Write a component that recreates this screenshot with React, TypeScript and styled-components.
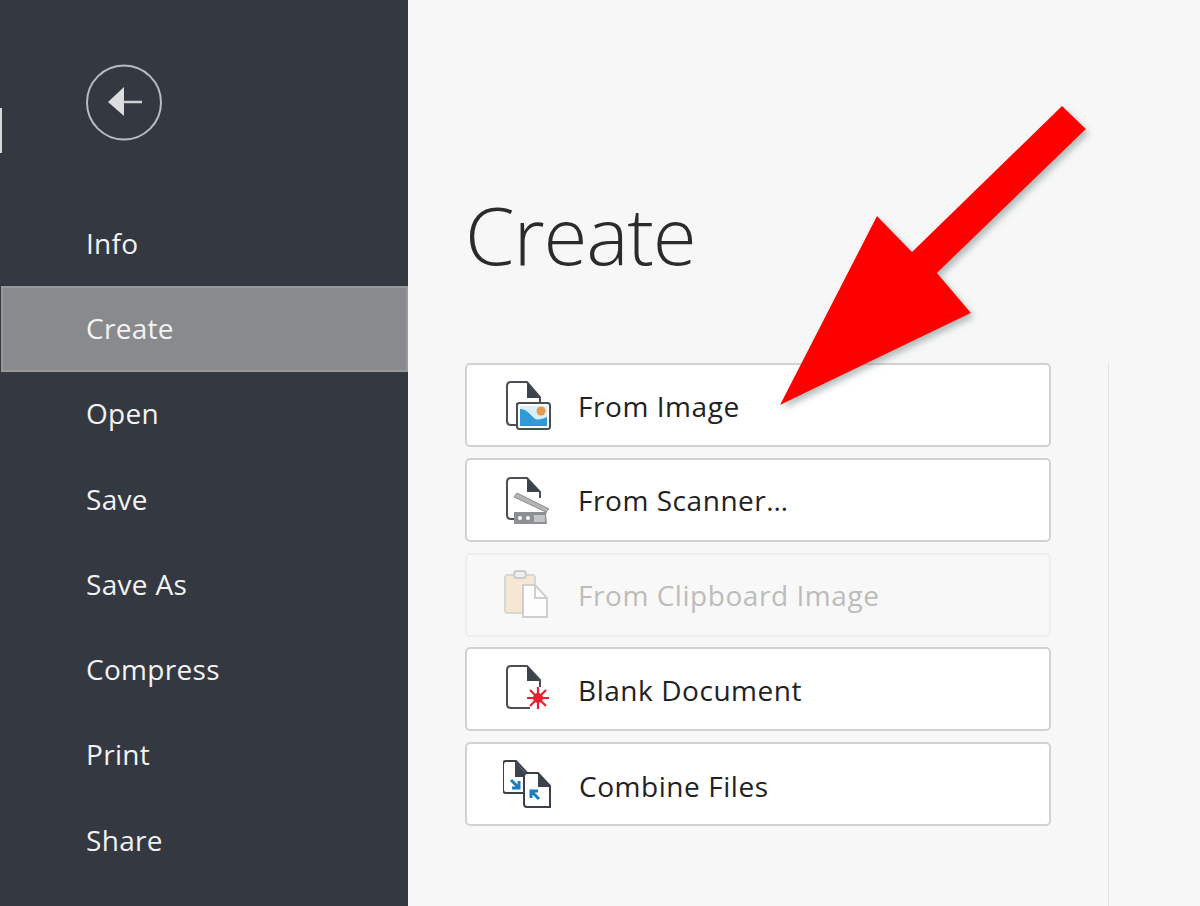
import React from "react";
import styled, { createGlobalStyle } from "styled-components";

const Global = createGlobalStyle`
  html, body { margin: 0; padding: 0; width: 1200px; height: 906px; overflow: hidden; background: #f7f7f7; }
  * { box-sizing: border-box; }
`;

const Page = styled.div`
  position: relative;
  display: flex;
  width: 1200px;
  height: 906px;
  overflow: hidden;
  font-family: "Open Sans", "Noto Sans", sans-serif;
`;

const Sidebar = styled.nav`
  position: relative;
  flex: 0 0 408px;
  height: 906px;
  background: #343841;
  padding: 64px 0 0 0;
  display: flex;
  flex-direction: column;
`;

const EdgeMark = styled.div`
  position: absolute;
  left: 0;
  top: 108px;
  width: 2px;
  height: 45px;
  background: #d8d8d8;
`;

const BackButton = styled.button`
  width: 78px;
  height: 78px;
  margin: 0 0 0 85px;
  padding: 0;
  border: 0;
  background: none;
  display: block;
`;

const Menu = styled.ul`
  list-style: none;
  margin: 59px 0 0;
  padding: 0;
  display: flex;
  flex-direction: column;
`;

const MenuItem = styled.li<{ $active?: boolean }>`
  height: 85.3px;
  display: flex;
  align-items: center;
  padding-left: ${(p) => (p.$active ? "85px" : "86px")};
  padding-bottom: 2px;
  font-size: 28px;
  letter-spacing: 0.3px;
  color: #f2f3f3;
  background: ${(p) => (p.$active ? "#898a8e" : "transparent")};
  box-shadow: ${(p) => (p.$active ? "inset 0 0 0 2px #96989c" : "none")};
  margin-left: ${(p) => (p.$active ? "1px" : "0")};
`;

const Main = styled.main`
  flex: 1;
  padding: 188px 0 0 57px;
  display: flex;
  flex-direction: column;
`;

const Title = styled.h1`
  margin: 0 0 83px;
  font-weight: 300;
  font-size: 80px;
  line-height: 92px;
  letter-spacing: -1.2px;
  color: #2b2b2b;
`;

const Columns = styled.div`
  display: flex;
  flex: 1;
`;

const List = styled.div`
  width: 586px;
  display: flex;
  flex-direction: column;
  gap: 10.8px;
`;

const Divider = styled.div`
  width: 1px;
  margin-left: 57px;
  background: #e2e2e2;
`;

const Row = styled.button<{ $disabled?: boolean; $gap?: number }>`
  height: 84px;
  width: 100%;
  padding: 0 0 0 36px;
  display: flex;
  align-items: center;
  gap: ${(p) => p.$gap ?? 21}px;
  text-align: left;
  border-radius: 5px;
  border: 2px solid ${(p) => (p.$disabled ? "#eeeeee" : "#d2d2d2")};
  background: ${(p) => (p.$disabled ? "#f8f8f8" : "#ffffff")};
  font-family: inherit;
  font-size: 28px;
  letter-spacing: 0.55px;
  color: ${(p) => (p.$disabled ? "#bcbcbc" : "#222222")};
`;

const RowLabel = styled.span<{ $drop?: number }>`
  padding-top: ${(p) => p.$drop ?? 1}px;
`;

const RowIcon = styled.svg`
  width: 54px;
  height: 54px;
  flex: none;
`;

const ArrowOverlay = styled.svg`
  position: absolute;
  left: 0;
  top: 0;
  width: 1200px;
  height: 906px;
  pointer-events: none;
`;

const ImageIcon = () => (
  <RowIcon viewBox="0 0 54 54">
    <path d="M8 4h16l13 15v7H14v21H8c-3 0-4-1-4-4V8c0-3 1-4 4-4z" fill="#fff" stroke="#4b4f55" strokeWidth="2" />
    <path d="M24 4l13 16H24z" fill="#3d434c" />
    <rect x="14" y="25" width="33" height="26" rx="2.5" fill="#fff" stroke="#4b4f55" strokeWidth="2" />
    <rect x="17" y="28" width="27" height="20" fill="#d9eef8" />
    <path d="M17 31c6 0 10 5 14 9 3 3 8 1 13-1v9H17z" fill="#2f9ad6" />
    <circle cx="38" cy="33" r="4.5" fill="#e69a4e" />
  </RowIcon>
);

const ScannerIcon = () => (
  <RowIcon viewBox="0 0 54 54">
    <path d="M8 5h16l13 14v6M8 5C5 5 4 6 4 9v33c0 3 1 4 4 4h3" fill="#fff" stroke="#4b4f55" strokeWidth="2" />
    <path d="M24 5l13 14H24z" fill="#3d434c" />
    <path d="M11 24l3-4 32 16-3 3z" fill="#b2b4b6" stroke="#8b8d90" strokeWidth="1" />
    <path d="M11 39h33l-1 2 1 10H11z" fill="#8d8f92" />
    <rect x="31" y="42" width="11" height="7" fill="#c4c5c7" />
    <circle cx="17" cy="45" r="2" fill="#fff" />
    <circle cx="25" cy="45" r="2" fill="#fff" />
  </RowIcon>
);

const ClipboardIcon = () => (
  <RowIcon viewBox="0 0 54 54">
    <rect x="2" y="7" width="30" height="38" rx="3" fill="#f6e7d4" stroke="#d6d6d2" strokeWidth="2" />
    <rect x="11" y="3" width="12" height="7" rx="3" fill="#eeeeee" stroke="#c9cbcd" strokeWidth="2" />
    <path d="M20 17h12l12 13v19H20z" fill="#fdfdfd" stroke="#cfcfcf" strokeWidth="2" strokeLinejoin="round" />
    <path d="M32 17v13h12" fill="none" stroke="#cfcfcf" strokeWidth="2" />
  </RowIcon>
);

const BlankIcon = () => (
  <RowIcon viewBox="0 0 54 54">
    <path d="M8 4h16l13 14v7M8 4C5 4 4 5 4 8v34c0 3 1 4 4 4h19" fill="#fff" stroke="#4b4f55" strokeWidth="2" />
    <path d="M24 4l13 15H24z" fill="#3d434c" />
    <g stroke="#e8202f" strokeWidth="2.2">
      <path d="M35 25v22M24 36h22M27 28l16 16M43 28L27 44" />
    </g>
    <circle cx="35" cy="36" r="5" fill="#e8202f" />
  </RowIcon>
);

const CombineIcon = () => (
  <RowIcon viewBox="0 0 54 54">
    <path d="M3 4h10l13 14v18H3c-2 0-3-1-3-3V7c0-2 1-3 3-3z" fill="#fff" stroke="#39414b" strokeWidth="2" />
    <path d="M12 4l14 16H12z" fill="#3d434c" />
    <path d="M24 16h11l12 13v21H24c-2 0-3-1-3-3V19c0-2 1-3 3-3z" fill="#fff" stroke="#39414b" strokeWidth="2" />
    <path d="M35 16l12 14H35z" fill="#3d434c" />
    <path d="M8 23l8 8M16 24v7H9" fill="none" stroke="#1b7cc0" strokeWidth="3" />
    <path d="M36 42l-8-8M28 41v-7h7" fill="none" stroke="#1b7cc0" strokeWidth="3" />
  </RowIcon>
);

const items = ["Info", "Create", "Open", "Save", "Save As", "Compress", "Print", "Share"];

const rows: { label: string; icon: React.ReactNode; disabled?: boolean; gap?: number; drop?: number }[] = [
  { label: "From Image", icon: <ImageIcon /> },
  { label: "From Scanner…", icon: <ScannerIcon /> },
  { label: "From Clipboard Image", icon: <ClipboardIcon />, disabled: true },
  { label: "Blank Document", icon: <BlankIcon /> },
  { label: "Combine Files", icon: <CombineIcon />, gap: 22, drop: 3 },
];

export default function App() {
  return (
    <Page>
      <Global />
      <Sidebar>
        <EdgeMark />
        <BackButton aria-label="Back">
          <svg viewBox="0 0 78 78" width="78" height="78">
            <circle cx="39" cy="38.5" r="37" fill="none" stroke="#b9bbbe" strokeWidth="2" />
            <path d="M23 38l16-15v29z" fill="#dcdddf" />
            <path d="M38 38h19" stroke="#cfd0d2" strokeWidth="2.5" />
          </svg>
        </BackButton>
        <Menu>
          {items.map((t) => (
            <MenuItem key={t} $active={t === "Create"}>
              {t}
            </MenuItem>
          ))}
        </Menu>
      </Sidebar>
      <Main>
        <Title>Create</Title>
        <Columns>
          <List>
            {rows.map((r) => (
              <Row key={r.label} $disabled={r.disabled} $gap={r.gap}>
                {r.icon}
                <RowLabel $drop={r.drop}>{r.label}</RowLabel>
              </Row>
            ))}
          </List>
          <Divider />
        </Columns>
      </Main>
      <ArrowOverlay viewBox="0 0 1200 906">
        <defs>
          <filter id="arrowShadow" x="-10%" y="-10%" width="125%" height="125%">
            <feDropShadow dx="3" dy="4" stdDeviation="3" floodColor="#7a8a8c" floodOpacity="0.55" />
          </filter>
        </defs>
        <polygon
          points="780,405 971,313 937,273 1086,129 1062,106 912,252 877,216"
          fill="#ff0000"
          filter="url(#arrowShadow)"
        />
      </ArrowOverlay>
    </Page>
  );
}
